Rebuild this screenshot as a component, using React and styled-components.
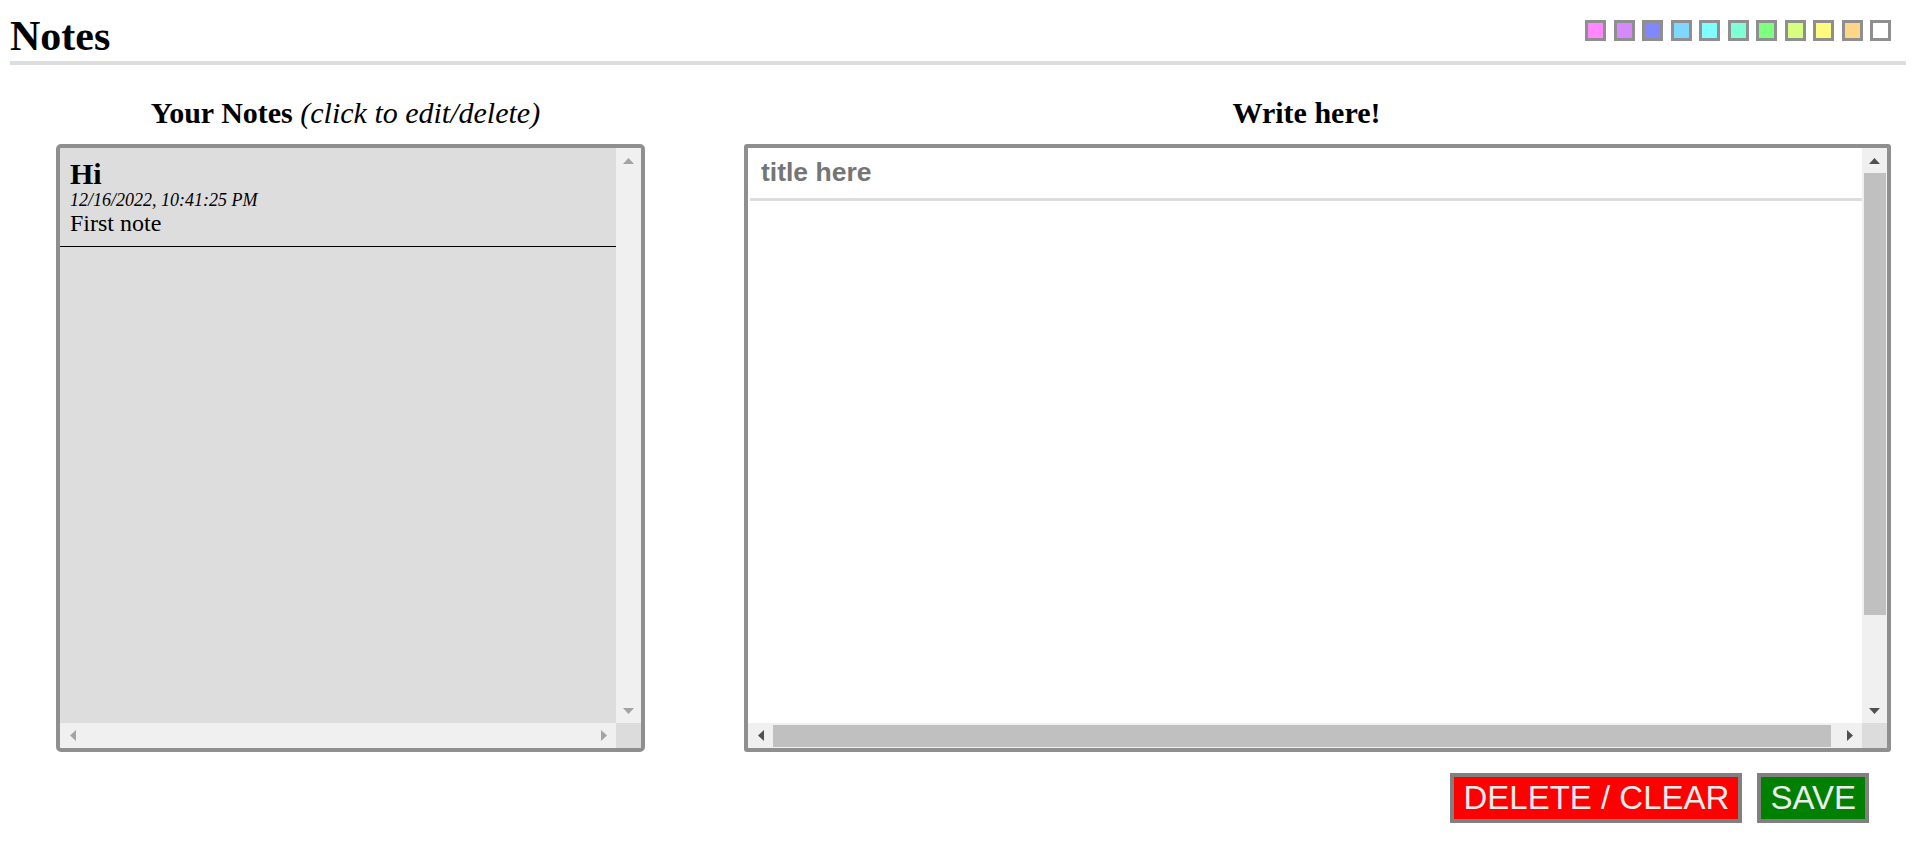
import React from 'react'
import styled, { createGlobalStyle } from 'styled-components'

const GlobalStyle = createGlobalStyle`
  body {
    margin: 0;
    background: #ffffff;
    color: #000000;
    font-family: "Liberation Serif", "Times New Roman", serif;
  }
`

const Header = styled.header`
  display: flex;
  justify-content: space-between;
  align-items: flex-start;
  margin: 0 12px 0 10px;
  padding: 13px 15px 1px 0;
  border-bottom: 4px solid #dddddd;

  h1 {
    margin: 0;
    font-size: 42px;
    line-height: 47px;
    font-weight: bold;
  }
`

const Swatches = styled.div`
  display: flex;
  gap: 7.5px;
  margin-top: 7px;
`

const Swatch = styled.button`
  width: 21px;
  height: 21px;
  padding: 0;
  box-sizing: border-box;
  border: 3px solid #8f8f8f;
  background: ${(p) => p.$color};
  cursor: pointer;
`

const Main = styled.main`
  display: flex;
  gap: 99px;
  padding: 31px 0 0 56px;
`

const Column = styled.section`
  display: flex;
  flex-direction: column;
  width: ${(p) => p.$width}px;
`

const Heading = styled.h2`
  margin: 0 0 15px;
  padding-right: ${(p) => p.$shift}px;
  font-size: 30px;
  line-height: 33px;
  font-weight: bold;
  text-align: center;

  em {
    font-weight: normal;
  }
`

const Panel = styled.div`
  display: grid;
  grid-template-columns: 1fr 25px;
  grid-template-rows: 1fr 25px;
  height: 608px;
  box-sizing: border-box;
  border: 4px solid #8f8f8f;
  border-radius: ${(p) => p.$radius}px;
  background: ${(p) => p.$bg};
  overflow: hidden;
`

const NoteList = styled.div`
  min-height: 0;
  overflow: hidden;
`

const NoteItem = styled.div`
  padding: 9px 10px;
  border-bottom: 1px solid #000000;
  cursor: pointer;

  h3 {
    margin: 0;
    font-size: 30px;
    line-height: 33px;
    font-weight: bold;
  }

  time {
    display: block;
    font-size: 18px;
    line-height: 20px;
    font-style: italic;
  }

  p {
    margin: 0;
    font-size: 24px;
    line-height: 27px;
  }
`

const Editor = styled.div`
  display: flex;
  flex-direction: column;
  min-height: 0;
  overflow: hidden;
`

const TitleInput = styled.input`
  height: 53px;
  box-sizing: border-box;
  margin-left: 2px;
  padding: 9px 11px 11px;
  border: none;
  border-bottom: 3px solid #dddddd;
  outline: none;
  font-family: "Liberation Sans", Arial, sans-serif;
  font-size: 26.5px;
  line-height: 30px;
  font-weight: bold;
  color: #333333;

  &::placeholder {
    color: #757575;
  }
`

const BodyArea = styled.textarea`
  flex: 1;
  border: none;
  outline: none;
  resize: none;
  padding: 8px 12px;
  font-family: "Liberation Sans", Arial, sans-serif;
  font-size: 20px;
  overflow: hidden;
`

const ScrollBar = styled.div`
  display: flex;
  flex-direction: ${(p) => (p.$vertical ? 'column' : 'row')};
  background: #f0f0f0;
`

const ArrowButton = styled.div`
  flex: 0 0 25px;
  display: flex;
  align-items: center;
  justify-content: center;
`

const Track = styled.div`
  flex: 1;
  display: flex;
  flex-direction: ${(p) => (p.$vertical ? 'column' : 'row')};
  padding: ${(p) => (p.$vertical ? '0 1px 0 2px' : '2px 0 1px 0')};
`

const Thumb = styled.div`
  flex: 0 0 ${(p) => p.$size};
  background: #c0c0c0;
`

const Corner = styled.div`
  background: #dcdcdc;
`

const ButtonRow = styled.div`
  display: flex;
  justify-content: flex-end;
  gap: 15px;
  margin-top: 21px;
  padding-right: 22px;
`

const ActionButton = styled.button`
  padding: 2px 9px;
  border: 4px solid #808080;
  background: ${(p) => p.$bg};
  color: #ececec;
  font-family: "Liberation Sans", Arial, sans-serif;
  font-size: 33px;
  line-height: 38px;
  cursor: pointer;
`

const arrowPaths = {
  up: 'M0 6 5.5 0 11 6Z',
  down: 'M0 0 5.5 6 11 0Z',
  left: 'M6 0 0 5.5 6 11Z',
  right: 'M0 0 6 5.5 0 11Z',
}

const Arrow = ({ dir, color }) => {
  const vertical = dir === 'up' || dir === 'down'
  const w = vertical ? 11 : 6
  const h = vertical ? 6 : 11
  return (
    <svg width={w} height={h} viewBox={`0 0 ${w} ${h}`}>
      <path d={arrowPaths[dir]} fill={color} />
    </svg>
  )
}

const Scroll = ({ vertical, thumb, color }) => (
  <ScrollBar $vertical={vertical}>
    <ArrowButton><Arrow dir={vertical ? 'up' : 'left'} color={color} /></ArrowButton>
    <Track $vertical={vertical}>{thumb && <Thumb $size={thumb} />}</Track>
    <ArrowButton><Arrow dir={vertical ? 'down' : 'right'} color={color} /></ArrowButton>
  </ScrollBar>
)

const colors = [
  '#ff88ff', '#d688ff', '#7f88ff', '#7fd6ff', '#7fffff', '#7fffd6',
  '#7fff7f', '#d6ff7f', '#fffa80', '#ffd688', '#ffffff',
]

const notes = [
  { title: 'Hi', date: '12/16/2022, 10:41:25 PM', body: 'First note' },
]

const App = () => {
  return (
    <>
      <GlobalStyle />
      <Header>
        <h1>Notes</h1>
        <Swatches>
          {colors.map((c) => <Swatch key={c} $color={c} />)}
        </Swatches>
      </Header>
      <Main>
        <Column $width={589}>
          <Heading $shift={10}>Your Notes <em>(click to edit/delete)</em></Heading>
          <Panel $radius={5} $bg="#dddddd">
            <NoteList>
              {notes.map((n) => (
                <NoteItem key={n.date}>
                  <h3>{n.title}</h3>
                  <time>{n.date}</time>
                  <p>{n.body}</p>
                </NoteItem>
              ))}
            </NoteList>
            <Scroll vertical color="#a3a3a3" />
            <Scroll color="#a3a3a3" />
            <Corner />
          </Panel>
        </Column>
        <Column $width={1147}>
          <Heading $shift={22}>Write here!</Heading>
          <Panel $radius={3} $bg="#ffffff">
            <Editor>
              <TitleInput placeholder="title here" />
              <BodyArea />
            </Editor>
            <Scroll vertical thumb="84.2%" color="#505050" />
            <Scroll thumb="99.4%" color="#505050" />
            <Corner />
          </Panel>
          <ButtonRow>
            <ActionButton $bg="#ff0000">DELETE / CLEAR</ActionButton>
            <ActionButton $bg="#008000">SAVE</ActionButton>
          </ButtonRow>
        </Column>
      </Main>
    </>
  )
}

export default App
